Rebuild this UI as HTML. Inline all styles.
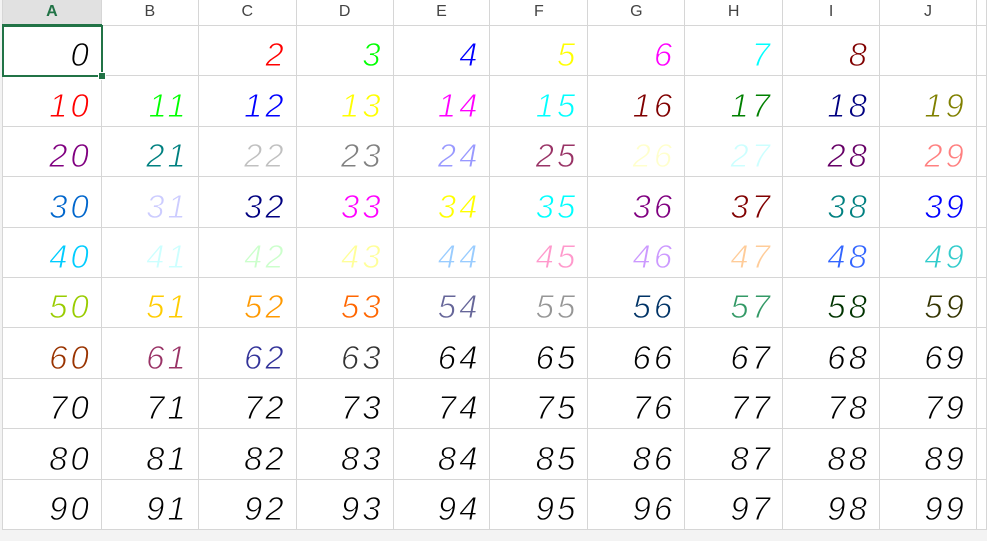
<!DOCTYPE html><html><head><style>
body{margin:0;width:987px;height:541px;background:#f3f3f3;overflow:hidden;font-family:"Liberation Sans",sans-serif}
#g{position:absolute;left:2px;top:0;border-collapse:collapse;table-layout:fixed;background:#fff}
#g td{border:1px solid #d6d6d6;padding:0 9px 0 0;text-align:right;vertical-align:bottom;height:49.4px;font-style:italic;font-size:33px;letter-spacing:3px;line-height:40px;overflow:hidden;white-space:nowrap;-webkit-text-stroke:0.9px #fff}
#g th{height:24px;border:1px solid #d6d6d6;border-top:none;font-weight:normal;font-size:16px;color:#444;text-align:center;background:#fff;padding:0}
#g th.a{background:#e1e1e1;color:#217346;font-weight:bold;border-bottom:2px solid #217346}
#sel{position:absolute;left:2px;top:25px;width:97px;height:48px;border:2px solid #217346}
#sel:after{content:"";position:absolute;right:-5px;bottom:-5px;width:6px;height:6px;background:#217346;border:1px solid #fff}
</style></head><body>
<table id="g">
<colgroup><col style="width:99px"><col style="width:97px"><col style="width:98px"><col style="width:97px"><col style="width:97px"><col style="width:98px"><col style="width:97px"><col style="width:98px"><col style="width:97px"><col style="width:97px"><col style="width:10px"></colgroup>
<tr><th class="a">A</th><th>B</th><th>C</th><th>D</th><th>E</th><th>F</th><th>G</th><th>H</th><th>I</th><th>J</th><th></th></tr>
<tr><td style="color:#000">0</td><td style="color:#fff">1</td><td style="color:#f00">2</td><td style="color:#0f0">3</td><td style="color:#00f">4</td><td style="color:#ff0">5</td><td style="color:#f0f">6</td><td style="color:#0ff">7</td><td style="color:#800000">8</td><td></td><td></td></tr>
<tr><td style="color:#f00">10</td><td style="color:#0f0">11</td><td style="color:#00f">12</td><td style="color:#ff0">13</td><td style="color:#f0f">14</td><td style="color:#0ff">15</td><td style="color:#800000">16</td><td style="color:#008000">17</td><td style="color:#000080">18</td><td style="color:#808000">19</td><td></td></tr>
<tr><td style="color:#800080">20</td><td style="color:#008080">21</td><td style="color:#c0c0c0">22</td><td style="color:#808080">23</td><td style="color:#9999ff">24</td><td style="color:#993366">25</td><td style="color:#ffffcc">26</td><td style="color:#ccffff">27</td><td style="color:#660066">28</td><td style="color:#ff8080">29</td><td></td></tr>
<tr><td style="color:#0066cc">30</td><td style="color:#ccccff">31</td><td style="color:#000080">32</td><td style="color:#f0f">33</td><td style="color:#ff0">34</td><td style="color:#0ff">35</td><td style="color:#800080">36</td><td style="color:#800000">37</td><td style="color:#008080">38</td><td style="color:#00f">39</td><td></td></tr>
<tr><td style="color:#00ccff">40</td><td style="color:#ccffff">41</td><td style="color:#ccffcc">42</td><td style="color:#ffff99">43</td><td style="color:#99ccff">44</td><td style="color:#ff99cc">45</td><td style="color:#cc99ff">46</td><td style="color:#ffcc99">47</td><td style="color:#3366ff">48</td><td style="color:#33cccc">49</td><td></td></tr>
<tr><td style="color:#99cc00">50</td><td style="color:#ffcc00">51</td><td style="color:#ff9900">52</td><td style="color:#ff6600">53</td><td style="color:#666699">54</td><td style="color:#969696">55</td><td style="color:#003366">56</td><td style="color:#339966">57</td><td style="color:#003300">58</td><td style="color:#333300">59</td><td></td></tr>
<tr><td style="color:#993300">60</td><td style="color:#993366">61</td><td style="color:#333399">62</td><td style="color:#333">63</td><td style="color:#000">64</td><td style="color:#000">65</td><td style="color:#000">66</td><td style="color:#000">67</td><td style="color:#000">68</td><td style="color:#000">69</td><td></td></tr>
<tr><td>70</td><td>71</td><td>72</td><td>73</td><td>74</td><td>75</td><td>76</td><td>77</td><td>78</td><td>79</td><td></td></tr>
<tr><td>80</td><td>81</td><td>82</td><td>83</td><td>84</td><td>85</td><td>86</td><td>87</td><td>88</td><td>89</td><td></td></tr>
<tr><td>90</td><td>91</td><td>92</td><td>93</td><td>94</td><td>95</td><td>96</td><td>97</td><td>98</td><td>99</td><td></td></tr>
</table>
<div id="sel"></div>
</body></html>
